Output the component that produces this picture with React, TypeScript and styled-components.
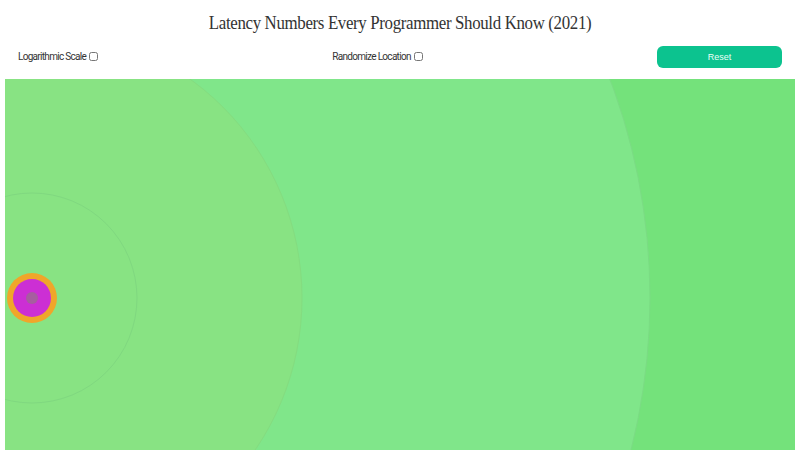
import * as React from 'react';
import styled, { createGlobalStyle } from 'styled-components';

const GlobalStyle = createGlobalStyle`
  html, body {
    margin: 0;
    padding: 0;
    background: #ffffff;
    overflow: hidden;
  }
  body {
    font-family: Roboto, 'Liberation Sans', sans-serif;
  }
`;

type Ring = { r: number; fill: string; stroke?: string };

// radii of the latency circles, largest first
const rings: Ring[] = [
  { r: 618, fill: '#80e68a', stroke: '#7bdc84' },
  { r: 270, fill: '#88e383', stroke: '#84dc80' },
  { r: 105, fill: 'none', stroke: '#80d880' },
  { r: 25, fill: '#f0a62a' },
  { r: 19, fill: '#cc2fd4' },
  { r: 6, fill: '#a65e9f' },
];

export default function App() {
  const [logScale, setLogScale] = React.useState(false);
  const [randomize, setRandomize] = React.useState(false);

  return (
    <Page>
      <GlobalStyle />
      <Header>
        <Title>Latency Numbers Every Programmer Should Know (2021)</Title>
      </Header>

      <Controls>
        <Option>
          Logarithmic Scale
          <Check
            type="checkbox"
            checked={logScale}
            onChange={() => setLogScale(!logScale)}
          />
        </Option>
        <Option>
          Randomize Location
          <Check
            type="checkbox"
            checked={randomize}
            onChange={() => setRandomize(!randomize)}
          />
        </Option>
        <ResetButton
          onClick={() => {
            setLogScale(false);
            setRandomize(false);
          }}
        >
          Reset
        </ResetButton>
      </Controls>

      <Stage>
        <svg width="100%" height="100%" viewBox="0 0 790 371" preserveAspectRatio="xMinYMin slice">
          <rect x="0" y="0" width="790" height="371" fill="#74e27b" />
          {rings.map((ring) => (
            <circle
              key={ring.r}
              cx={27}
              cy={219}
              r={ring.r}
              fill={ring.fill}
              stroke={ring.stroke ?? 'none'}
              strokeWidth={1}
            />
          ))}
        </svg>
      </Stage>
    </Page>
  );
}

const Page = styled.div`
  height: 450px;
  display: flex;
  flex-direction: column;
`;

const Header = styled.div`
  display: flex;
  justify-content: center;
  padding-top: 10px;
  height: 25px;
`;

const Title = styled.h1`
  margin: 0;
  font-family: 'Liberation Serif', 'Times New Roman', serif;
  font-weight: 400;
  font-size: 19.5px;
  line-height: 25px;
  color: #333333;
  letter-spacing: -0.4px;
  white-space: nowrap;
  transform: scaleX(0.865);
`;

const Controls = styled.div`
  display: flex;
  align-items: center;
  justify-content: space-between;
  padding: 10px 18px 0 18px;
  height: 23px;
  margin-bottom: 11px;
`;

const Option = styled.label`
  display: flex;
  align-items: center;
  font-size: 10px;
  letter-spacing: -0.7px;
  color: #333333;
  cursor: pointer;
`;

const Check = styled.input`
  width: 9px;
  height: 9px;
  margin: 0 0 1px 3px;
`;

const ResetButton = styled.button`
  width: 125px;
  height: 22px;
  border: none;
  border-radius: 6px;
  background: #0cc38f;
  color: #eafff7;
  font-family: 'Liberation Sans', Arial, sans-serif;
  font-size: 9px;
  cursor: pointer;
`;

const Stage = styled.div`
  flex: 1;
  margin: 0 5px;
  overflow: hidden;
`;
